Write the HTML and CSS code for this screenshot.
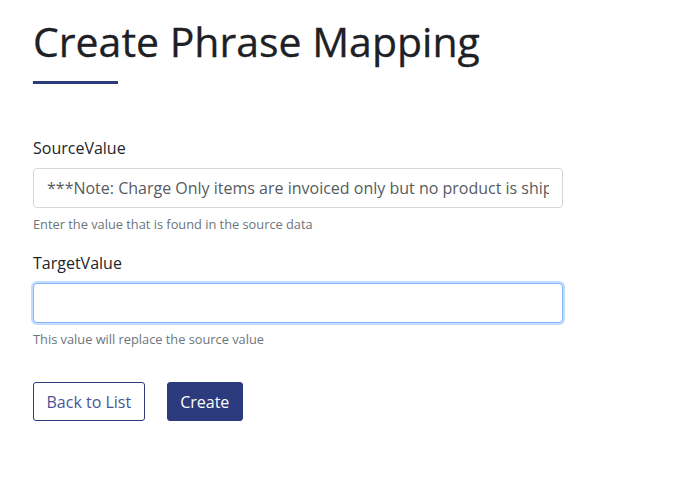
FILE: index.html
```html
<!DOCTYPE html>
<html lang="en">
<head>
<meta charset="utf-8">
<title>Create Phrase Mapping</title>
<link rel="stylesheet" href="styles.css">
</head>
<body>
<main class="page">
  <h1 class="title">Create Phrase Mapping</h1>
  <div class="rule"></div>
  <form class="form">
    <div class="field">
      <label class="label" for="src">SourceValue</label>
      <input class="input" id="src" type="text" value="***Note: Charge Only items are invoiced only but no product is shipped">
      <small class="help">Enter the value that is found in the source data</small>
    </div>
    <div class="field">
      <label class="label" for="tgt">TargetValue</label>
      <input class="input input-focus" id="tgt" type="text" value="">
      <small class="help">This value will replace the source value</small>
    </div>
    <div class="actions">
      <a class="btn btn-outline" href="#">Back to List</a>
      <button class="btn btn-primary" type="button">Create</button>
    </div>
  </form>
</main>
</body>
</html>
```
FILE: styles.css
```css
* { box-sizing: border-box; }
html, body { margin: 0; padding: 0; background: #fff; }
body {
  font-family: "Open Sans", "Noto Sans", "Liberation Sans", sans-serif;
  color: #212529;
}
.page {
  padding: 12px 33px 0 33px;
  width: 563px;
  box-sizing: content-box;
}
.title {
  margin: 0;
  font-size: 41px;
  font-weight: 500;
  line-height: 58px;
  color: #1d2024;
  letter-spacing: 0;
  -webkit-text-stroke: 0.3px #1d2024;
}
.rule {
  width: 85px;
  height: 3px;
  background: #2b3b7d;
  margin-top: 11px;
}
.form { margin-top: 52px; display: flex; flex-direction: column; }
.field { display: flex; flex-direction: column; margin-bottom: 18px; }
.label {
  font-size: 16px;
  line-height: 24px;
  margin-bottom: 8px;
  color: #212529;
}
.input {
  width: 530px;
  height: 40px;
  border: 1px solid #d5d8db;
  border-radius: 4px;
  padding: 0 13px;
  font-family: inherit;
  font-size: 16px;
  color: #555b61;
  background: #fff;
  outline: none;
}
.input-focus {
  border-color: #86b7fe;
  box-shadow: 0 0 0 2px rgba(13, 110, 253, 0.25);
}
.help {
  font-size: 12.8px;
  line-height: 18px;
  margin-top: 7px;
  color: #6c757d;
}
.actions { display: flex; gap: 22px; margin-top: 16px; }
.btn {
  height: 39px;
  display: inline-flex;
  align-items: center;
  justify-content: center;
  padding: 0 12.5px;
  font-family: inherit;
  font-size: 16px;
  border-radius: 3px;
  text-decoration: none;
  cursor: pointer;
}
.btn-outline {
  border: 1px solid #2b3b7d;
  color: #4a5694;
  background: #fff;
}
.btn-primary {
  border: 1px solid #2b3b7d;
  background: #2b3b7d;
  color: #fff;
}
```
